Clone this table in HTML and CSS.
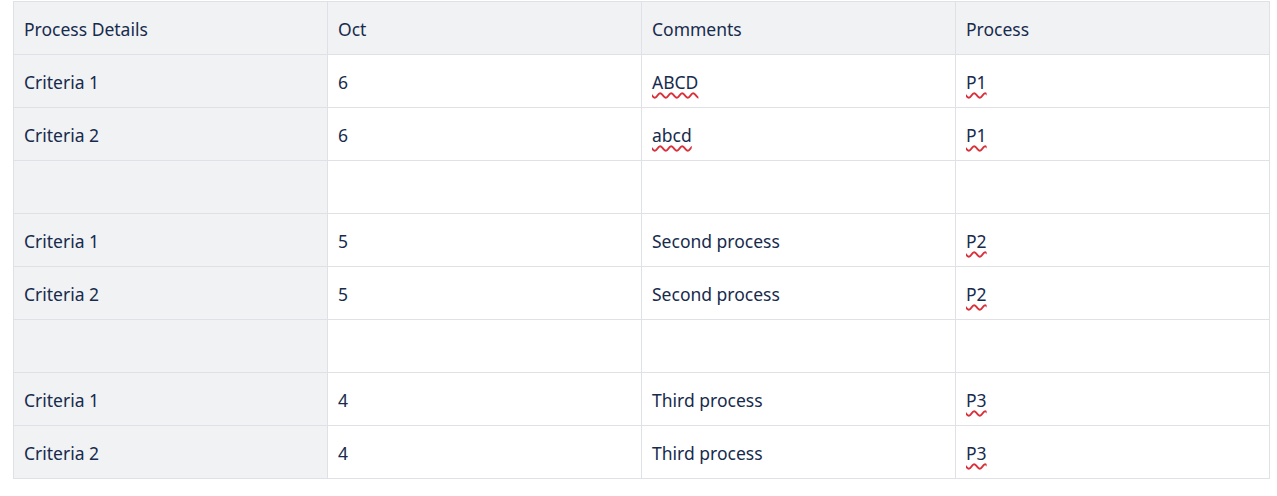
FILE: index.html
```html
<!DOCTYPE html>
<html lang="en">
<head>
    <meta charset="UTF-8">
    <title>Process Table</title>
    <link rel="stylesheet" href="styles.css">
</head>
<body>
    <table class="process-table">
        <thead>
            <tr>
                <th>Process Details</th>
                <th>Oct</th>
                <th>Comments</th>
                <th>Process</th>
            </tr>
        </thead>
        <tbody>
            <tr>
                <th>Criteria 1</th>
                <td>6</td>
                <td><span class="spell">ABCD</span></td>
                <td><span class="spell">P1</span></td>
            </tr>
            <tr>
                <th>Criteria 2</th>
                <td>6</td>
                <td><span class="spell">abcd</span></td>
                <td><span class="spell">P1</span></td>
            </tr>
            <tr class="blank">
                <th></th><td></td><td></td><td></td>
            </tr>
            <tr>
                <th>Criteria 1</th>
                <td>5</td>
                <td>Second process</td>
                <td><span class="spell">P2</span></td>
            </tr>
            <tr>
                <th>Criteria 2</th>
                <td>5</td>
                <td>Second process</td>
                <td><span class="spell">P2</span></td>
            </tr>
            <tr class="blank">
                <th></th><td></td><td></td><td></td>
            </tr>
            <tr>
                <th>Criteria 1</th>
                <td>4</td>
                <td>Third process</td>
                <td><span class="spell">P3</span></td>
            </tr>
            <tr>
                <th>Criteria 2</th>
                <td>4</td>
                <td>Third process</td>
                <td><span class="spell">P3</span></td>
            </tr>
        </tbody>
    </table>
</body>
</html>
```

FILE: styles.css
```css
body {
    margin: 0;
    padding: 1px 7px 0 13px;
    background-color: #fff;
    font-family: "Noto Sans", "Open Sans", sans-serif;
    color: #172b4d;
}

.process-table {
    border-collapse: collapse;
    width: 1257px;
    table-layout: fixed;
    font-size: 17.5px;
}

.process-table th,
.process-table td {
    height: 53px;
    padding: 2px 10px 0;
    border: 1px solid #dfe1e6;
    text-align: left;
    vertical-align: middle;
    font-weight: normal;
    box-sizing: border-box;
}

.process-table thead th,
.process-table tbody th {
    background-color: #f1f2f4;
}

.spell {
    text-decoration: underline wavy #d9303a;
    text-decoration-thickness: 1.5px;
    text-underline-offset: 3px;
}
```
